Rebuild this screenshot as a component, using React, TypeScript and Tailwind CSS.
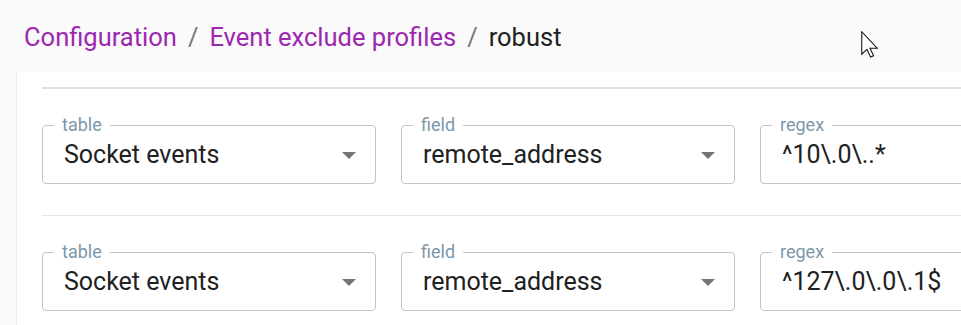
import React from 'react';

type Rule = { table: string; field: string; regex: string };

const RULES: Rule[] = [
  { table: 'Socket events', field: 'remote_address', regex: '^10\\.0\\..*' },
  { table: 'Socket events', field: 'remote_address', regex: '^127\\.0\\.0\\.1$' },
];

const font = { fontFamily: 'Roboto, "Noto Sans", sans-serif' };

function Outlined({ label, value, select }: { label: string; value: string; select?: boolean }) {
  return (
    <fieldset className="w-[334px] shrink-0 rounded-[4px] border border-[#c4c4c4]">
      <legend className="ml-[11px] px-[8px] text-[18px] leading-[18px] text-[#7d97aa]">{label}</legend>
      <div className="flex items-center justify-between pl-[21px] pr-[19px] pt-[7px] pb-[14px]">
        <span className="text-[25px] leading-[28px] text-[#212121] whitespace-nowrap">{value}</span>
        {select && (
          <svg width="14" height="7" viewBox="0 0 14 7" className="shrink-0">
            <path d="M0 0h14L7 7z" fill="#757575" />
          </svg>
        )}
      </div>
    </fieldset>
  );
}

export default function App() {
  return (
    <div className="relative h-[325px] w-[961px] overflow-hidden bg-[#fafafa]" style={font}>
      {/* Breadcrumb */}
      <div className="flex h-[72px] items-center gap-[11px] pl-[24px] pt-[2px] text-[25.5px] leading-[30px]">
        <span className="text-[#9c27b0]">Configuration</span>
        <span className="text-[#777]">/</span>
        <span className="text-[#9c27b0]">Event exclude profiles</span>
        <span className="text-[#777]">/</span>
        <span className="text-[#212121]">robust</span>
      </div>

      {/* Panel */}
      <div className="ml-[16px] h-full border-l border-[#ececec] bg-white pl-[25px] pt-[15px]">
        <div className="h-[2px] bg-[#e0e0e0]" />
        {RULES.map((r, i) => (
          <div key={i}>
            {i > 0 && <div className="h-px bg-[#e6e6e6]" />}
            <div className="flex gap-[25px] pt-[27px] pb-[31px]">
              <Outlined label="table" value={r.table} select />
              <Outlined label="field" value={r.field} select />
              <Outlined label="regex" value={r.regex} />
            </div>
          </div>
        ))}
      </div>

      {/* mouse cursor */}
      <svg
        width="18"
        height="27"
        viewBox="0 0 12 18"
        className="pointer-events-none absolute left-[861px] top-[31px]"
      >
        <path
          d="M0.5 0.5 L0.5 15.5 L4 12.3 L6.4 17.4 L8.4 16.5 L6 11.5 L10.8 11.5 Z"
          fill="#fff"
          stroke="#111"
          strokeWidth="0.7"
          strokeLinejoin="miter"
        />
      </svg>
    </div>
  );
}
